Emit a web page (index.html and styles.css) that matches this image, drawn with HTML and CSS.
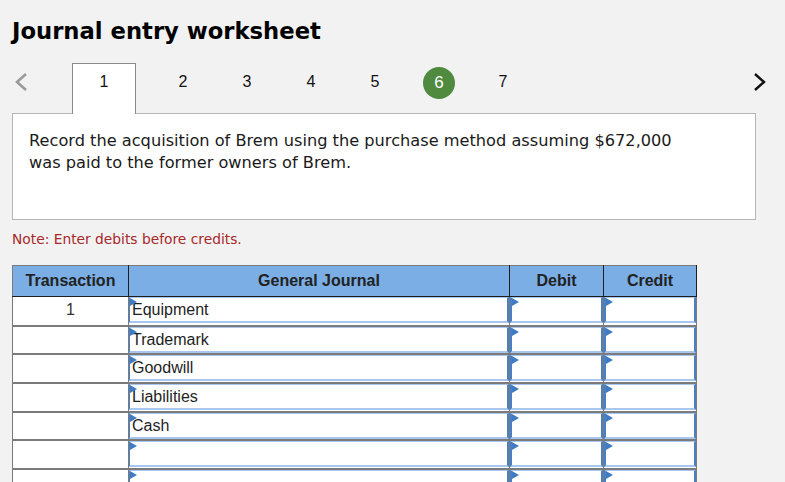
FILE: index.html
```html
<!DOCTYPE html>
<html>
<head>
<meta charset="utf-8">
<title>Journal entry worksheet</title>
<link rel="stylesheet" href="styles.css">
</head>
<body>
<h1 class="title">Journal entry worksheet</h1>
<div class="nav">
  <span class="arrow arrow-left"><svg width="14" height="20" viewBox="0 0 14 20"><polyline points="12,2 3,10 12,18" fill="none" stroke="#9a9a9a" stroke-width="2.6"/></svg></span>
  <div class="tab tab-active"><span class="num">1</span></div>
  <div class="tab"><span class="num">2</span></div>
  <div class="tab"><span class="num">3</span></div>
  <div class="tab"><span class="num">4</span></div>
  <div class="tab"><span class="num">5</span></div>
  <div class="tab"><span class="num circle">6</span></div>
  <div class="tab"><span class="num">7</span></div>
  <span class="arrow arrow-right"><svg width="14" height="20" viewBox="0 0 14 20"><polyline points="2,2 11,10 2,18" fill="none" stroke="#111" stroke-width="2.4"/></svg></span>
</div>
<div class="content">
  <p>Record the acquisition of Brem using the purchase method assuming $672,000 was paid to the former owners of Brem.</p>
</div>
<p class="note">Note: Enter debits before credits.</p>
<table class="journal">
  <colgroup>
    <col class="w-trans">
    <col class="w-gj">
    <col class="w-amt">
    <col>
  </colgroup>
  <thead>
    <tr>
      <th class="c-trans">Transaction</th>
      <th>General Journal</th>
      <th>Debit</th>
      <th>Credit</th>
    </tr>
  </thead>
  <tbody>
    <tr><td class="trans">1</td><td class="cell"><div class="inp"><span class="flag"></span>Equipment</div></td><td class="cell"><div class="inp amt"><span class="flag"></span></div></td><td class="cell"><div class="inp amt"><span class="flag"></span></div></td></tr>
    <tr><td class="trans"></td><td class="cell"><div class="inp"><span class="flag"></span>Trademark</div></td><td class="cell"><div class="inp amt"><span class="flag"></span></div></td><td class="cell"><div class="inp amt"><span class="flag"></span></div></td></tr>
    <tr><td class="trans"></td><td class="cell"><div class="inp"><span class="flag"></span>Goodwill</div></td><td class="cell"><div class="inp amt"><span class="flag"></span></div></td><td class="cell"><div class="inp amt"><span class="flag"></span></div></td></tr>
    <tr><td class="trans"></td><td class="cell"><div class="inp"><span class="flag"></span>Liabilities</div></td><td class="cell"><div class="inp amt"><span class="flag"></span></div></td><td class="cell"><div class="inp amt"><span class="flag"></span></div></td></tr>
    <tr><td class="trans"></td><td class="cell"><div class="inp"><span class="flag"></span>Cash</div></td><td class="cell"><div class="inp amt"><span class="flag"></span></div></td><td class="cell"><div class="inp amt"><span class="flag"></span></div></td></tr>
    <tr><td class="trans"></td><td class="cell"><div class="inp"><span class="flag"></span></div></td><td class="cell"><div class="inp amt"><span class="flag"></span></div></td><td class="cell"><div class="inp amt"><span class="flag"></span></div></td></tr>
    <tr><td class="trans"></td><td class="cell"><div class="inp"><span class="flag"></span></div></td><td class="cell"><div class="inp amt"><span class="flag"></span></div></td><td class="cell"><div class="inp amt"><span class="flag"></span></div></td></tr>
    <tr><td class="trans"></td><td class="cell"><div class="inp"><span class="flag"></span></div></td><td class="cell"><div class="inp amt"><span class="flag"></span></div></td><td class="cell"><div class="inp amt"><span class="flag"></span></div></td></tr>
  </tbody>
</table>
</body>
</html>
```
FILE: styles.css
```css
html, body {
  margin: 0;
  padding: 0;
  background: #f2f2f2;
}
body {
  padding: 0 12px;
  font-family: "DejaVu Sans", Verdana, sans-serif;
  color: #1f1f1f;
  overflow: hidden;
}
.title {
  margin: 0;
  padding-top: 17px;
  font-size: 22.7px;
  line-height: 28px;
  font-weight: bold;
  color: #000;
  height: 46px;
}
.nav {
  display: flex;
  align-items: flex-end;
  height: 50px;
  font-family: "Liberation Sans", Arial, sans-serif;
  font-size: 16px;
  color: #111;
  position: relative;
  z-index: 2;
}
.arrow {
  align-self: flex-start;
  display: flex;
  padding-top: 9px;
}
.arrow-left {
  margin-left: 2px;
  width: 58px;
}
.arrow-right {
  margin-left: auto;
  margin-right: 6px;
}
.tab {
  width: 64px;
  height: 50px;
  display: flex;
  justify-content: center;
  align-items: flex-start;
  box-sizing: border-box;
}
.tab-active {
  width: 64px;
  height: 51px;
  margin-bottom: -1px;
  background: #fff;
  border: 1px solid #8a8a8a;
  border-bottom: none;
  margin-right: 15px;
}
.num {
  display: block;
  margin-top: 10px;
  line-height: 18px;
}
.tab-active .num {
  margin-top: 9px;
}
.circle {
  width: 32px;
  height: 32px;
  border-radius: 50%;
  background: #4f8a3f;
  color: #fff;
  text-align: center;
  line-height: 32px;
  margin-top: 4px;
  font-size: 17px;
}
.content {
  background: #fff;
  border: 1px solid #b5b5b5;
  width: 742px;
  height: 105px;
  box-sizing: content-box;
  position: relative;
  z-index: 1;
}
.content p {
  margin: 0;
  width: 660px;
  padding: 16px 16px 0 16px;
  font-size: 16.2px;
  line-height: 22px;
  color: #1a1a1a;
}
.note {
  margin: 11px 0 0 0;
  font-size: 13.8px;
  line-height: 16px;
  color: #a8292a;
}
.journal {
  margin-top: 18px;
  border-collapse: collapse;
  width: 685px;
  table-layout: fixed;
  font-family: "Liberation Sans", Arial, sans-serif;
  font-size: 16px;
}
.w-trans {
  width: 116px;
}
.w-gj {
  width: 381px;
}
.w-amt {
  width: 94px;
}
.journal th {
  background: #7aaee5;
  height: 30px;
  padding: 0;
  font-weight: bold;
  color: #222;
  border: 1px solid #1e1e1e;
  border-top-color: #7b7b7b;
}
.journal th.c-trans {
  border-left-color: #7b7b7b;
}
.journal td {
  padding: 0;
  height: 26.7px;
  border: 1px solid #7b7b7b;
  border-top-width: 2px;
  background: #fff;
  vertical-align: top;
}
.journal tbody tr:first-child td {
  border-top: none;
  height: 27.7px;
}
.trans {
  text-align: center;
  color: #333;
  line-height: 26px;
}
.inp {
  position: relative;
  box-sizing: border-box;
  height: 26px;
  margin-top: 0;
  border-top: 1px solid #a9c7ee;
  border-bottom: 2px solid #a9c7ee;
  border-left: 1px solid #4a7fc1;
  border-right: 2px solid #4a7fc1;
  padding-left: 2px;
  line-height: 24px;
  color: #1e1e1e;
  white-space: nowrap;
  overflow: hidden;
}
.inp.amt {
  border-left: 2px solid #4a7fc1;
  border-right: 2px solid #4a7fc1;
}
.flag {
  position: absolute;
  left: 0;
  top: 0;
  width: 0;
  height: 0;
  border-left: 7px solid #3f7cc4;
  border-top: 4px solid transparent;
  border-bottom: 4px solid transparent;
}
```
